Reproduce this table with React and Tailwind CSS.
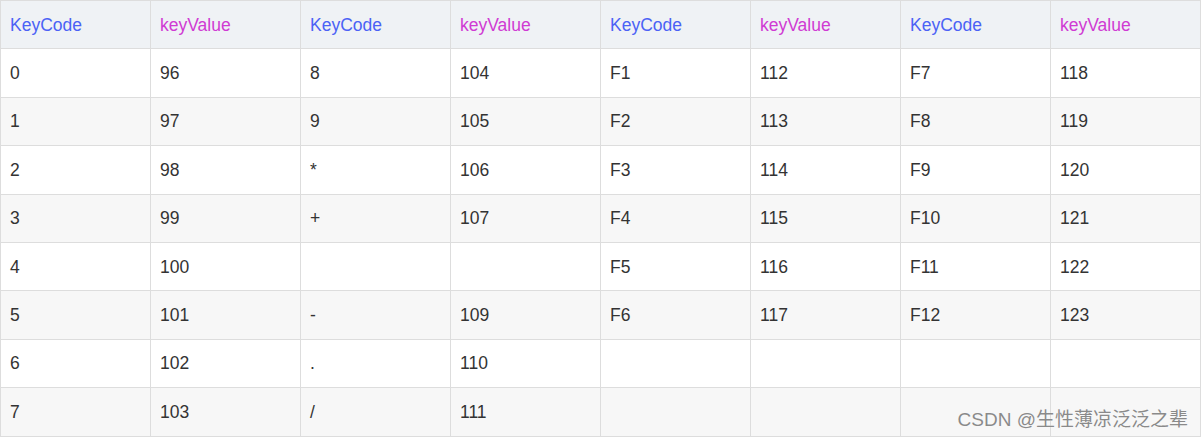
import React from "react";

const rows = [
  ["0", "96", "8", "104", "F1", "112", "F7", "118"],
  ["1", "97", "9", "105", "F2", "113", "F8", "119"],
  ["2", "98", "*", "106", "F3", "114", "F9", "120"],
  ["3", "99", "+", "107", "F4", "115", "F10", "121"],
  ["4", "100", "", "", "F5", "116", "F11", "122"],
  ["5", "101", "-", "109", "F6", "117", "F12", "123"],
  ["6", "102", ".", "110", "", "", "", ""],
  ["7", "103", "/", "111", "", "", "", ""],
];

export default function App() {
  return (
    <div className="relative w-[1203px] h-[438px] bg-white font-['Liberation_Sans',Arial,sans-serif] text-[17.5px] text-[#333]">
      <table className="border-collapse table-fixed w-[1201px]">
        <thead>
          <tr className="h-[48.4px] bg-[#eff2f5]">
            {[0, 1, 2, 3].map((i) => (
              <React.Fragment key={i}>
                <th className="w-[150px] border border-[#dddddd] px-[9px] text-left font-normal text-[#4b62f5]">KeyCode</th>
                <th className="w-[150px] border border-[#dddddd] px-[9px] text-left font-normal text-[#cf3bd3]">keyValue</th>
              </React.Fragment>
            ))}
          </tr>
        </thead>
        <tbody>
          {rows.map((r, ri) => (
            <tr key={ri} className={`h-[48.4px] ${ri % 2 === 1 ? "bg-[#f7f7f7]" : "bg-white"}`}>
              {r.map((c, ci) => (
                <td key={ci} className="border border-[#dddddd] px-[9px]">{c}</td>
              ))}
            </tr>
          ))}
        </tbody>
      </table>
      <div className="absolute right-[15px] top-[406px] text-[19px] text-[#8a8a8a] font-['Liberation_Sans','Noto_Sans_CJK_SC',sans-serif] [text-shadow:0_0_1px_#fff]">
        CSDN @生性薄凉泛泛之辈
      </div>
    </div>
  );
}
